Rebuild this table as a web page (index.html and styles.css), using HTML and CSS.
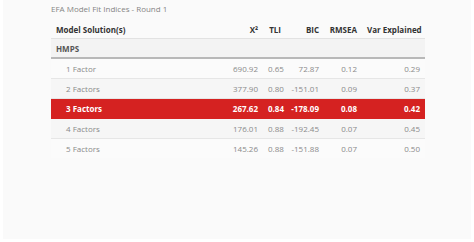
FILE: index.html
```html
<!DOCTYPE html>
<html>
<head>
<meta charset="utf-8">
<link rel="stylesheet" href="styles.css">
</head>
<body>
<div class="frame">
  <div class="title">EFA Model Fit Indices - Round 1</div>
  <table class="fit">
    <colgroup>
      <col class="c-model"><col class="c-x2"><col class="c-tli"><col class="c-bic"><col class="c-rmsea"><col class="c-var">
    </colgroup>
    <thead>
      <tr class="head">
        <th class="left">Model Solution(s)</th>
        <th>X²</th><th>TLI</th><th>BIC</th><th>RMSEA</th><th>Var Explained</th>
      </tr>
    </thead>
    <tbody>
      <tr class="group"><td class="left" colspan="6">HMPS</td></tr>
      <tr class="row"><td class="left ind">1 Factor</td><td>690.92</td><td>0.65</td><td>72.87</td><td>0.12</td><td>0.29</td></tr>
      <tr class="row alt"><td class="left ind">2 Factors</td><td>377.90</td><td>0.80</td><td>-151.01</td><td>0.09</td><td>0.37</td></tr>
      <tr class="row sel"><td class="left ind">3 Factors</td><td>267.62</td><td>0.84</td><td>-178.09</td><td>0.08</td><td>0.42</td></tr>
      <tr class="row alt"><td class="left ind">4 Factors</td><td>176.01</td><td>0.88</td><td>-192.45</td><td>0.07</td><td>0.45</td></tr>
      <tr class="row last"><td class="left ind">5 Factors</td><td>145.26</td><td>0.88</td><td>-151.88</td><td>0.07</td><td>0.50</td></tr>
    </tbody>
  </table>
</div>
</body>
</html>
```
FILE: styles.css
```css
html, body { margin: 0; padding: 0; background: #ffffff; }
body { font-family: "Open Sans", "Liberation Sans", sans-serif; }
.frame {
  margin-left: 3px;
  width: 468px;
  height: 239px;
  background: #fafafa;
  box-sizing: border-box;
  padding: 3px 0 0 48px;
}
.title { font-size: 8px; color: #858585; line-height: 12px; }
.fit {
  margin-top: 5px;
  width: 374px;
  border-collapse: collapse;
  font-size: 8px;
  table-layout: fixed;
}
.c-model { width: 174px; }
.c-x2 { width: 38px; }
.c-tli { width: 23px; }
.c-bic { width: 38px; }
.c-rmsea { width: 38px; }
.c-var { width: 63px; }
.fit th, .fit td { text-align: right; padding: 0 5px; white-space: nowrap; }
.fit .left { text-align: left; }
.head th { height: 18px; font-weight: 700; color: #333; border-bottom: 1px solid #e2e2e2; }
.group td { height: 18px; font-weight: 700; color: #555; background: #f3f3f3; border-bottom: 2px solid #b8b8b8; }
.row td { height: 19px; color: #8a8a8a; background: #fbfbfb; border-bottom: 1px solid #e6e6e6; }
.row.alt td { background: #f6f6f6; }
.row .ind { padding-left: 15px; }
.row.sel td { background: #d52221; color: #fff; font-weight: 700; border-bottom-color: #d52221; }
.row.last td { border-bottom: none; }
```
